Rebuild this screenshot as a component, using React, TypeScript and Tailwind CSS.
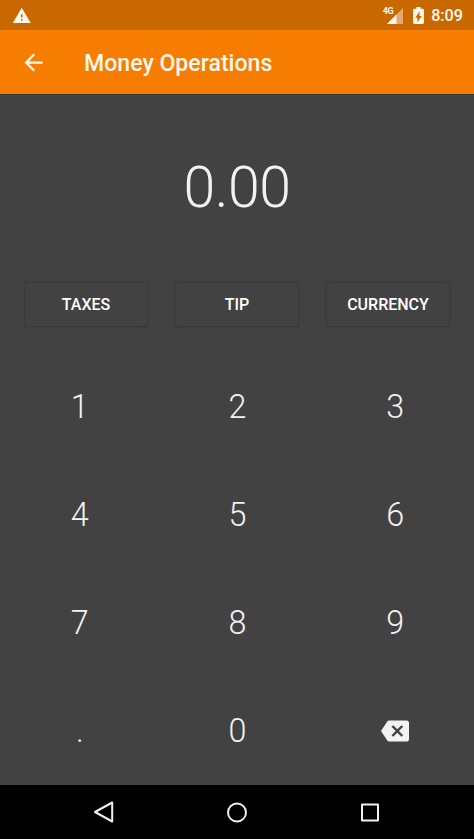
import type { ReactNode } from "react";

const actions = ["TAXES", "TIP", "CURRENCY"];
const digits = ["1", "2", "3", "4", "5", "6", "7", "8", "9", ".", "0"];

function StatusBar() {
  return (
    <div className="flex h-[30px] items-center justify-between bg-[#c96800] pr-[11px] pl-3 text-[#fff8ee]">
      <svg viewBox="0 0 24 24" className="mt-[2px] size-[19.5px]" fill="currentColor">
        <path d="M1 21h22L12 2 1 21zm12-3h-2v-2h2v2zm0-4h-2v-4h2v4z" />
      </svg>
      <div className="flex h-full items-center">
        <span className="mb-[7px] text-[9px] leading-none font-bold tracking-tighter">4G</span>
        <svg viewBox="0 0 16 16" className="mt-px -ml-[6px] h-4 w-4">
          <path d="M16 0v16H0z" fill="#e6a972" />
          <path d="M9.5 6.5V16H0z" fill="#fff8ee" />
        </svg>
        <svg viewBox="6 2 12 20" className="mt-px ml-[9px] h-[17px] w-[13px]" preserveAspectRatio="none" fill="currentColor">
          <path d="M15.67 4H14V2h-4v2H8.33C7.6 4 7 4.6 7 5.33v15.33C7 21.4 7.6 22 8.33 22h7.33c.74 0 1.34-.6 1.34-1.33V5.33C17 4.6 16.4 4 15.67 4zM11 20v-5.5H9L13 7v5.5h2L11 20z" />
        </svg>
        <span className="mt-[3px] ml-[6px] text-[16.2px] leading-none font-medium">8:09</span>
      </div>
    </div>
  );
}

function AppBar({ title }: { title: string }) {
  return (
    <header className="flex h-16 items-center bg-[#f77d00] pl-5 text-[#fff8ee]">
      <button type="button" aria-label="Back">
        <svg viewBox="0 0 24 24" className="size-[27px]" fill="currentColor">
          <path d="M20 11H7.83l5.59-5.59L12 4l-8 8 8 8 1.41-1.41L7.83 13H20v-2z" />
        </svg>
      </button>
      <h1 className="mt-[3px] ml-[37px] text-[23.1px] leading-none font-medium">{title}</h1>
    </header>
  );
}

function Key({ label, children }: { label: string; children: ReactNode }) {
  return (
    <button
      type="button"
      aria-label={label}
      className="flex items-center justify-center text-[32.3px] leading-none font-light"
    >
      {children}
    </button>
  );
}

function NavBar() {
  return (
    <nav className="flex h-[54px] items-center justify-center gap-[105px] bg-black">
      <svg viewBox="0 0 28 28" className="size-7" fill="none" stroke="#f0f0f0" strokeWidth="2" strokeLinejoin="round">
        <path d="M22.2 4.5v19L5 14z" />
      </svg>
      <svg viewBox="0 0 28 28" className="size-7" fill="none" stroke="#f0f0f0" strokeWidth="2">
        <circle cx="14" cy="14.5" r="9" />
      </svg>
      <svg viewBox="0 0 28 28" className="size-7" fill="none" stroke="#f0f0f0" strokeWidth="2" strokeLinejoin="round">
        <path d="M6 6.5h16v16H6z" />
      </svg>
    </nav>
  );
}

export default function App() {
  return (
    <div className="flex h-[839px] w-[474px] flex-col bg-[#424242] font-['Roboto',sans-serif] text-[#f2f2f2]">
      <StatusBar />
      <AppBar title="Money Operations" />
      <main className="flex flex-1 flex-col border-t border-[#383838]">
        <div className="flex h-[188px] items-center justify-center pb-[3px] text-[57.2px] leading-none font-light tracking-[-0.5px]">
          0.00
        </div>
        <div className="grid grid-cols-3 gap-[29px] px-[25px]">
          {actions.map((label) => (
            <button
              key={label}
              type="button"
              className="h-[43px] rounded-[2px] pt-px text-base leading-none font-medium text-white shadow-[0_0_2px_1px_#393939,0_1px_1px_#353535]"
            >
              {label}
            </button>
          ))}
        </div>
        <div className="mt-[27px] grid flex-1 grid-cols-3 grid-rows-4 pl-px">
          {digits.map((digit) => (
            <Key key={digit} label={digit}>
              {digit}
            </Key>
          ))}
          <Key label="Delete">
            <svg viewBox="0 0 24 24" className="mr-px size-7" fill="currentColor">
              <path d="M22 3H7c-.69 0-1.23.35-1.59.88L0 12l5.41 8.11c.36.53.9.89 1.59.89h15c1.1 0 2-.9 2-2V5c0-1.1-.9-2-2-2zm-3 12.59L17.59 17 14 13.41 10.41 17 9 15.59 12.59 12 9 8.41 10.41 7 14 10.59 17.59 7 19 8.41 15.41 12 19 15.59z" />
            </svg>
          </Key>
        </div>
      </main>
      <NavBar />
    </div>
  );
}
